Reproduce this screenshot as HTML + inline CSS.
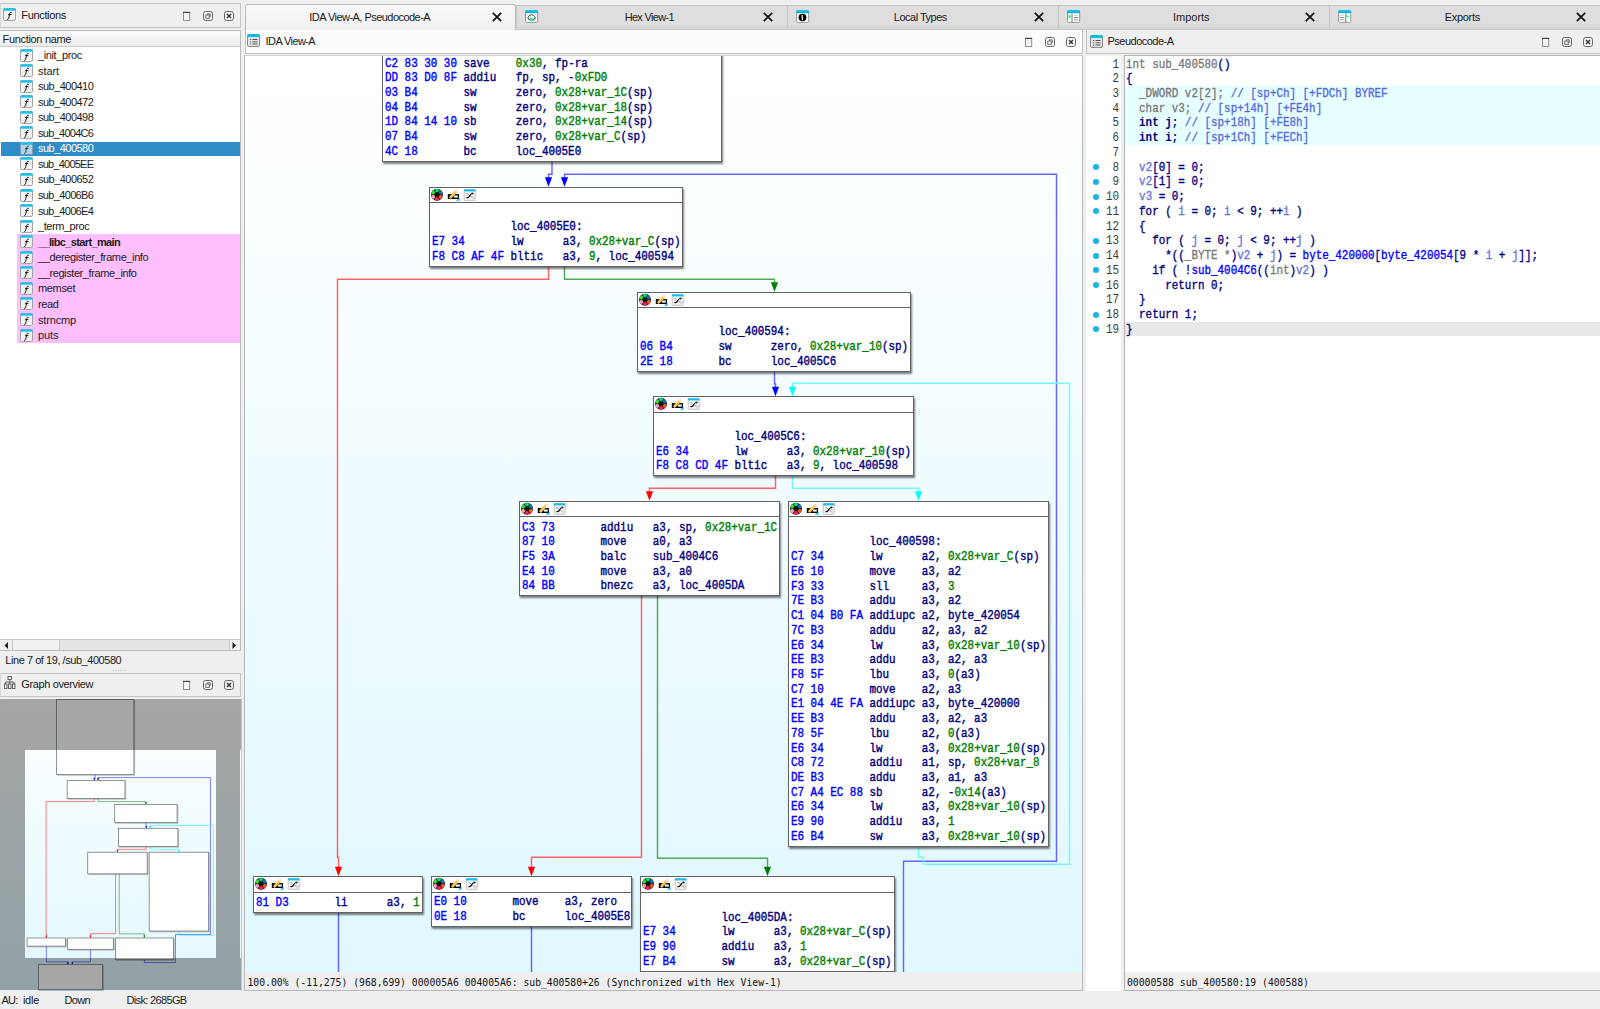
<!DOCTYPE html><html><head><meta charset="utf-8"><title>IDA</title><style>
*{box-sizing:border-box;margin:0;padding:0}
html,body{width:1600px;height:1009px;overflow:hidden;background:#efefef}
body{position:relative;font-family:"Liberation Sans",sans-serif;font-size:11px;letter-spacing:-0.38px;color:#1a1a1a}
.abs{position:absolute}
.ui{position:absolute;white-space:nowrap;line-height:14px;height:14px}
.mono{font-family:"Liberation Mono",monospace;font-size:11px;letter-spacing:-0.055px;white-space:pre}
.tbar{position:absolute;background:#efefef;border:1px solid #c4c4c4;border-left-color:#d8d8d8}
.row{position:absolute;left:0;width:240px;height:16px}
.row .t{position:absolute;left:38px;top:1px;line-height:15.5px;white-space:nowrap}
.fic{position:absolute;left:20px;top:1.5px;width:13px;height:13px}
.node{position:absolute;background:#fff;border:1px solid #636363;box-shadow:1.2px 1.8px 1.8px rgba(0,0,0,.5)}
.node .hd{position:absolute;left:0;top:0;right:0;height:15.4px;border-bottom:1px solid #636363}
.gl{position:absolute;white-space:pre;font-family:"Liberation Mono",monospace;font-size:12.4px;-webkit-text-stroke:0.4px currentColor;line-height:15px;height:15px;letter-spacing:-0.004px;color:#000080;transform:scaleX(0.88);transform-origin:0 0}
.b{color:#0000ff}.g{color:#008000}.n{color:#000080}
.cl{position:absolute;left:1126px;white-space:pre;-webkit-text-stroke:0.35px currentColor;font-family:"Liberation Mono",monospace;font-size:12.4px;line-height:15px;height:15px;letter-spacing:-0.004px;color:#000080;transform:scaleX(0.88);transform-origin:0 0}
.ln{position:absolute;left:1088px;width:31px;text-align:right;font-family:"Liberation Mono",monospace;font-size:12.4px;line-height:15px;height:15px;letter-spacing:-0.004px;color:#3a3a3a;transform:scaleX(0.88);transform-origin:100% 0}
.dot{position:absolute;left:1093px;width:6px;height:6px;border-radius:3px;background:#17b5e8}
.kb{color:#000080;font-weight:bold;-webkit-text-stroke:0}.gray{color:#7a7a7a}.cm{color:#5a6ae0}.lv{color:#6a74d8}.gv{color:#0000ff}.k{color:#000080}
</style></head><body>
<svg width="0" height="0" style="position:absolute"><defs>
<g id="i-f"><rect x="0.5" y="0.5" width="12" height="12" rx="1.3" fill="#f2f2f2" stroke="#a4a4a4"/><rect x="0.4" y="0.4" width="12.2" height="2.3" fill="#12c4f2"/><path d="M8.3 4.3 C7.3 4 7 4.6 6.8 5.5 L5.6 10.4 C5.4 11.2 5 11.6 4.4 11.4 M5.4 6.6 H8" fill="none" stroke="#111" stroke-width="0.95" stroke-linecap="round"/></g>
<g id="i-dock"><rect x="0.5" y="1.5" width="6.2" height="8" fill="#f6f6f6" stroke="#858585" stroke-width="0.9"/><rect x="0" y="0.8" width="7.2" height="1.2" fill="#444"/></g>
<g id="i-float"><rect x="0.5" y="0.5" width="9" height="9" rx="2" fill="none" stroke="#666"/><rect x="2.8" y="4" width="3.4" height="3.4" fill="none" stroke="#666" stroke-width=".9"/><path d="M4.5 4 V2.8 H7.3 V5.6 H6.2" fill="none" stroke="#666" stroke-width=".9"/></g>
<g id="i-close"><rect x="0.5" y="0.5" width="9" height="9" rx="2.2" fill="none" stroke="#666"/><path d="M3 3 L7 7 M7 3 L3 7" stroke="#333" stroke-width="1.4"/></g>
<g id="i-x"><path d="M0.8 0.8 L9.2 9.2 M9.2 0.8 L0.8 9.2" stroke="#111" stroke-width="1.7" fill="none"/></g>
<g id="n-hdr"><circle cx="8.0" cy="7.65" r="6" fill="#0c1414"/><path d="M5.59 2.48 A5.7 5.7 0 0 1 10.41 2.48 L9.14 5.20 A2.7 2.7 0 0 0 6.86 5.20Z" fill="#00e070"/><path d="M11.27 2.98 A5.7 5.7 0 0 1 13.68 7.15 L10.69 7.41 A2.7 2.7 0 0 0 9.55 5.44Z" fill="#1272b4"/><path d="M13.68 8.15 A5.7 5.7 0 0 1 11.27 12.32 L9.55 9.86 A2.7 2.7 0 0 0 10.69 7.89Z" fill="#ff5212"/><path d="M10.41 12.82 A5.7 5.7 0 0 1 5.59 12.82 L6.86 10.10 A2.7 2.7 0 0 0 9.14 10.10Z" fill="#ff2052"/><path d="M4.73 12.32 A5.7 5.7 0 0 1 2.32 8.15 L5.31 7.89 A2.7 2.7 0 0 0 6.45 9.86Z" fill="#ffa2b2"/><path d="M2.32 7.15 A5.7 5.7 0 0 1 4.73 2.98 L6.45 5.44 A2.7 2.7 0 0 0 5.31 7.41Z" fill="#34e434"/><rect x="18.8" y="7.1" width="11.2" height="4.9" fill="#000"/><rect x="24.8" y="8.5" width="4" height="2.1" fill="#fff"/><path d="M21.6 10.2 L27 4.5" stroke="#f6c650" stroke-width="2.7" stroke-linecap="round" fill="none"/><path d="M26.7 4.8 L27.5 4" stroke="#f3dcc8" stroke-width="2.2" stroke-linecap="round"/><path d="M26.6 13.8 H30.6 V10.8 Z" fill="#12c0f0"/><rect x="35.2" y="2.6" width="11" height="10.8" rx="0.6" fill="#f3f3f3" stroke="#b9b9b9" stroke-width="0.8"/><rect x="34.9" y="2.3" width="11.6" height="2.1" fill="#12c0f0"/><path d="M37.4 6.4 C40 6.6 41.6 10.4 44.2 10.6" fill="none" stroke="#9c9c9c" stroke-width="0.9"/><circle cx="44.3" cy="10.7" r="1" fill="#fff" stroke="#b5b5b5" stroke-width="0.6"/><path d="M37.4 10.6 H38.6 C41 10.6 40.6 6.6 43.2 6.5" fill="none" stroke="#111" stroke-width="1.15"/><path d="M42.8 5.2 L45 6.5 L42.8 7.8Z" fill="#111"/></g>
</defs></svg>
<div class="tbar" style="left:0;top:3px;width:241px;height:24.7px"></div>
<svg class="abs" style="left:3.2px;top:7.8px" width="13" height="13"><use href="#i-f"/></svg>
<div class="ui" style="left:21.3px;top:8px;letter-spacing:-0.343px;">Functions</div>
<svg class="abs" style="left:182.9px;top:10.7px" width="8" height="11"><use href="#i-dock"/></svg>
<svg class="abs" style="left:203px;top:10.5px" width="10" height="10"><use href="#i-float"/></svg>
<svg class="abs" style="left:224px;top:10.5px" width="10" height="10"><use href="#i-close"/></svg>
<div class="abs" style="left:0;top:29.5px;width:241px;height:621px;background:#fff;border:1px solid #bcbcbc;border-left:0"></div>
<div class="abs" style="left:0;top:30.5px;width:240px;height:16.5px;background:linear-gradient(#fbfbfb,#ececec);border-bottom:1px solid #cfcfcf"></div>
<div class="ui" style="left:2.6px;top:31.5px;letter-spacing:-0.328px;">Function name</div>
<div class="abs" style="left:17px;top:233.72px;width:223px;height:108.92px;background:#ffbfff"></div>
<div class="row" style="top:47.00px"><svg class="fic" width="13" height="13"><use href="#i-f"/></svg><div class="t" style="letter-spacing:-0.394px;">_init_proc</div></div>
<div class="row" style="top:62.56px"><svg class="fic" width="13" height="13"><use href="#i-f"/></svg><div class="t" style="letter-spacing:-0.078px;">start</div></div>
<div class="row" style="top:78.12px"><svg class="fic" width="13" height="13"><use href="#i-f"/></svg><div class="t" style="letter-spacing:-0.535px;">sub_400410</div></div>
<div class="row" style="top:93.68px"><svg class="fic" width="13" height="13"><use href="#i-f"/></svg><div class="t" style="letter-spacing:-0.535px;">sub_400472</div></div>
<div class="row" style="top:109.24px"><svg class="fic" width="13" height="13"><use href="#i-f"/></svg><div class="t" style="letter-spacing:-0.535px;">sub_400498</div></div>
<div class="row" style="top:124.80px"><svg class="fic" width="13" height="13"><use href="#i-f"/></svg><div class="t" style="letter-spacing:-0.718px;">sub_4004C6</div></div>
<div class="abs" style="left:0.5px;top:141.56px;width:239.5px;height:14.36px;background:#308cc6"></div>
<div class="row" style="top:140.36px"><svg class="fic" width="13" height="13"><use href="#i-f"/></svg><div class="t" style="color:#fff;letter-spacing:-0.535px;">sub_400580</div><div class="abs" style="left:20px;top:3.5px;width:13px;height:11px;background:rgba(48,140,198,.32)"></div></div>
<div class="row" style="top:155.92px"><svg class="fic" width="13" height="13"><use href="#i-f"/></svg><div class="t" style="letter-spacing:-0.780px;">sub_4005EE</div></div>
<div class="row" style="top:171.48px"><svg class="fic" width="13" height="13"><use href="#i-f"/></svg><div class="t" style="letter-spacing:-0.535px;">sub_400652</div></div>
<div class="row" style="top:187.04px"><svg class="fic" width="13" height="13"><use href="#i-f"/></svg><div class="t" style="letter-spacing:-0.657px;">sub_4006B6</div></div>
<div class="row" style="top:202.60px"><svg class="fic" width="13" height="13"><use href="#i-f"/></svg><div class="t" style="letter-spacing:-0.657px;">sub_4006E4</div></div>
<div class="row" style="top:218.16px"><svg class="fic" width="13" height="13"><use href="#i-f"/></svg><div class="t" style="letter-spacing:-0.438px;">_term_proc</div></div>
<div class="row" style="top:233.72px"><svg class="fic" width="13" height="13"><use href="#i-f"/></svg><div class="t" style="font-weight:bold;letter-spacing:-0.643px;">__libc_start_main</div></div>
<div class="row" style="top:249.28px"><svg class="fic" width="13" height="13"><use href="#i-f"/></svg><div class="t" style="letter-spacing:-0.390px;">__deregister_frame_info</div></div>
<div class="row" style="top:264.84px"><svg class="fic" width="13" height="13"><use href="#i-f"/></svg><div class="t" style="letter-spacing:-0.405px;">__register_frame_info</div></div>
<div class="row" style="top:280.40px"><svg class="fic" width="13" height="13"><use href="#i-f"/></svg><div class="t" style="letter-spacing:-0.336px;">memset</div></div>
<div class="row" style="top:295.96px"><svg class="fic" width="13" height="13"><use href="#i-f"/></svg><div class="t" style="letter-spacing:-0.354px;">read</div></div>
<div class="row" style="top:311.52px"><svg class="fic" width="13" height="13"><use href="#i-f"/></svg><div class="t" style="letter-spacing:-0.159px;">strncmp</div></div>
<div class="row" style="top:327.08px"><svg class="fic" width="13" height="13"><use href="#i-f"/></svg><div class="t" style="letter-spacing:-0.135px;">puts</div></div>
<div class="abs" style="left:0;top:638.5px;width:240px;height:11.6px;background:#e4e4e4;border-top:1px solid #c8c8c8"></div>
<div class="abs" style="left:11.5px;top:639.5px;width:48px;height:10.6px;background:#f1f1f1;border-left:1px solid #c4c4c4;border-right:1px solid #c4c4c4"></div>
<div class="abs" style="left:0;top:639.5px;width:11.5px;height:10.6px;background:#efefef"></div>
<div class="abs" style="left:229px;top:639.5px;width:11px;height:10.6px;background:#efefef;border-left:1px solid #c4c4c4"></div>
<svg class="abs" style="left:4px;top:641.5px" width="5" height="7"><path d="M4 0 L0.5 3.5 L4 7 Z" fill="#222"/></svg>
<svg class="abs" style="left:232px;top:641.5px" width="5" height="7"><path d="M0.5 0 L4 3.5 L0.5 7 Z" fill="#222"/></svg>
<div class="ui" style="left:5.3px;top:653px;letter-spacing:-0.449px;">Line 7 of 19, /sub_400580</div>
<div class="tbar" style="left:0;top:672.5px;width:241px;height:24px"></div>
<svg class="abs" style="left:4px;top:676px" width="12" height="14"><g fill="none" stroke="#555" stroke-width="0.9"><rect x="4" y="0.5" width="3.5" height="3"/><path d="M5.8 3.5 V6 M1.5 8 V6 H10 V8 M5.8 6 V8"/><rect x="0.5" y="8" width="2.5" height="4.5"/><rect x="4.5" y="8" width="2.5" height="4.5"/><rect x="8.5" y="8" width="2.5" height="4.5"/></g></svg>
<div class="ui" style="left:21.2px;top:677px;letter-spacing:-0.359px;">Graph overview</div>
<svg class="abs" style="left:182.9px;top:679.7px" width="8" height="11"><use href="#i-dock"/></svg>
<svg class="abs" style="left:203px;top:679.5px" width="10" height="10"><use href="#i-float"/></svg>
<svg class="abs" style="left:224px;top:679.5px" width="10" height="10"><use href="#i-close"/></svg>
<div class="ui" style="left:1.5px;top:992.8px;letter-spacing:-0.779px;">AU:</div>
<div class="ui" style="left:22.9px;top:992.8px;letter-spacing:-0.230px;">idle</div>
<div class="ui" style="left:64.4px;top:992.8px;letter-spacing:-0.630px;">Down</div>
<div class="ui" style="left:126.5px;top:992.8px;letter-spacing:-0.655px;">Disk: 2685GB</div>
<div class="abs" style="left:113px;top:669.5px;width:14px;height:1px;background:repeating-linear-gradient(90deg,#c4c4c4 0,#c4c4c4 1px,transparent 1px,transparent 2.4px)"></div>
<div class="abs" style="left:0;top:698.5px;width:240.5px;height:292px;overflow:hidden;background:linear-gradient(#ffffff,#e0f8ff)">
<svg class="abs" style="left:0;top:0" width="240.5" height="292">
<path d="M95.15 75.52 L95.15 78.61 L94.35 78.61 L94.35 81.46" fill="none" stroke="#0000ff" stroke-width="0.9" stroke-opacity="0.55"/>
<path d="M93.35 79.06 L95.35 79.06 L94.35 81.46 Z" fill="#0000ff"/>
<path d="M175.47 261.06 L175.47 235.59 L210.43 235.59 L210.43 78.61 L98.01 78.61 L98.01 81.46" fill="none" stroke="#0000ff" stroke-width="0.9" stroke-opacity="0.55"/>
<path d="M97.01 79.06 L99.01 79.06 L98.01 81.46 Z" fill="#0000ff"/>
<path d="M94.35 99.51 L94.35 102.60 L46.14 102.60 L46.14 234.67 L46.36 234.67 L46.36 239.01" fill="none" stroke="#ff0000" stroke-width="0.9" stroke-opacity="0.55"/>
<path d="M45.36 236.61 L47.36 236.61 L46.36 239.01 Z" fill="#ff0000"/>
<path d="M98.01 99.51 L98.01 102.60 L145.99 102.60 L145.99 105.45" fill="none" stroke="#008000" stroke-width="0.9" stroke-opacity="0.55"/>
<path d="M144.99 103.05 L146.99 103.05 L145.99 105.45 Z" fill="#008000"/>
<path d="M145.99 123.51 L145.99 126.48 L146.22 126.48 L146.22 129.33" fill="none" stroke="#0000ff" stroke-width="0.9" stroke-opacity="0.55"/>
<path d="M145.22 126.93 L147.22 126.93 L146.22 129.33 Z" fill="#0000ff"/>
<path d="M178.89 232.04 L178.89 234.67 L180.04 234.67 L180.04 236.27 L213.40 236.27 L213.40 126.36 L150.10 126.36 L150.10 129.33" fill="none" stroke="#00ffff" stroke-width="0.9" stroke-opacity="0.55"/>
<path d="M149.10 126.93 L151.10 126.93 L150.10 129.33 Z" fill="#00ffff"/>
<path d="M146.22 147.38 L146.22 150.35 L117.43 150.35 L117.43 153.21" fill="none" stroke="#ff0000" stroke-width="0.9" stroke-opacity="0.55"/>
<path d="M116.43 150.81 L118.43 150.81 L117.43 153.21 Z" fill="#ff0000"/>
<path d="M150.10 147.38 L150.10 150.35 L178.89 150.35 L178.89 153.21" fill="none" stroke="#00ffff" stroke-width="0.9" stroke-opacity="0.55"/>
<path d="M177.89 150.81 L179.89 150.81 L178.89 153.21 Z" fill="#00ffff"/>
<path d="M115.60 174.80 L115.60 234.67 L90.47 234.67 L90.47 239.01" fill="none" stroke="#ff0000" stroke-width="0.9" stroke-opacity="0.55"/>
<path d="M89.47 236.61 L91.47 236.61 L90.47 239.01 Z" fill="#ff0000"/>
<path d="M119.26 174.80 L119.26 234.90 L144.39 234.90 L144.39 239.01" fill="none" stroke="#008000" stroke-width="0.9" stroke-opacity="0.55"/>
<path d="M143.39 236.61 L145.39 236.61 L144.39 239.01 Z" fill="#008000"/>
<path d="M46.36 247.12 L46.36 262.89 L67.96 262.89 L67.96 265.63" fill="none" stroke="#0000ff" stroke-width="0.9" stroke-opacity="0.55"/>
<path d="M66.96 263.23 L68.96 263.23 L67.96 265.63 Z" fill="#0000ff"/>
<path d="M90.47 250.32 L90.47 262.89 L72.30 262.89 L72.30 265.63" fill="none" stroke="#0000ff" stroke-width="0.9" stroke-opacity="0.55"/>
<path d="M71.30 263.23 L73.30 263.23 L72.30 265.63 Z" fill="#0000ff"/>
<path d="M144.39 260.61 L144.39 263.58 L175.47 263.58 L175.47 261.06" fill="none" stroke="#0000ff" stroke-width="0.9" stroke-opacity="0.55"/>
<rect x="56.53" y="0.57" width="77.35" height="74.95" fill="#fff" stroke="#7a7a7a" stroke-width="0.8"/>
<path d="M57.13 76.32 H134.68 V1.17" fill="none" stroke="#000" stroke-opacity="0.25" stroke-width="0.9"/>
<rect x="67.16" y="81.46" width="57.81" height="18.05" fill="#fff" stroke="#7a7a7a" stroke-width="0.8"/>
<path d="M67.76 100.31 H125.77 V82.06" fill="none" stroke="#000" stroke-opacity="0.25" stroke-width="0.9"/>
<rect x="114.69" y="105.45" width="62.38" height="18.05" fill="#fff" stroke="#7a7a7a" stroke-width="0.8"/>
<path d="M115.29 124.31 H177.87 V106.05" fill="none" stroke="#000" stroke-opacity="0.25" stroke-width="0.9"/>
<rect x="118.46" y="129.33" width="59.41" height="18.05" fill="#fff" stroke="#7a7a7a" stroke-width="0.8"/>
<path d="M119.06 148.18 H178.67 V129.93" fill="none" stroke="#000" stroke-opacity="0.25" stroke-width="0.9"/>
<rect x="87.72" y="153.21" width="59.41" height="21.59" fill="#fff" stroke="#7a7a7a" stroke-width="0.8"/>
<path d="M88.32 175.60 H147.93 V153.81" fill="none" stroke="#000" stroke-opacity="0.25" stroke-width="0.9"/>
<rect x="149.19" y="153.21" width="59.41" height="78.83" fill="#fff" stroke="#7a7a7a" stroke-width="0.8"/>
<path d="M149.79 232.84 H209.40 V153.81" fill="none" stroke="#000" stroke-opacity="0.25" stroke-width="0.9"/>
<rect x="27.06" y="239.01" width="38.50" height="8.11" fill="#fff" stroke="#7a7a7a" stroke-width="0.8"/>
<path d="M27.66 247.92 H66.36 V239.61" fill="none" stroke="#000" stroke-opacity="0.25" stroke-width="0.9"/>
<rect x="67.62" y="239.01" width="45.81" height="11.31" fill="#fff" stroke="#7a7a7a" stroke-width="0.8"/>
<path d="M68.22 251.12 H114.23 V239.61" fill="none" stroke="#000" stroke-opacity="0.25" stroke-width="0.9"/>
<rect x="115.49" y="239.01" width="57.92" height="21.59" fill="#fff" stroke="#7a7a7a" stroke-width="0.8"/>
<path d="M116.09 261.41 H174.21 V239.61" fill="none" stroke="#000" stroke-opacity="0.25" stroke-width="0.9"/>
<rect x="38.39" y="265.63" width="64.21" height="25.14" fill="#fff" stroke="#7a7a7a" stroke-width="0.8"/>
<path d="M38.99 291.57 H103.40 V266.23" fill="none" stroke="#000" stroke-opacity="0.25" stroke-width="0.9"/>
</svg>
<div class="abs" style="left:0;top:0;width:240.5px;height:51.30px;background:rgba(0,0,0,0.35)"></div>
<div class="abs" style="left:0;top:259.70px;width:240.5px;height:32.30px;background:rgba(0,0,0,0.35)"></div>
<div class="abs" style="left:0;top:51.30px;width:25px;height:208.40px;background:rgba(0,0,0,0.35)"></div>
<div class="abs" style="left:216.4px;top:51.30px;width:24.099999999999994px;height:208.40px;background:rgba(0,0,0,0.35)"></div>
</div>
<div class="abs" style="left:240.5px;top:698.5px;width:1px;height:292px;background:#c8c8c8"></div>
<div class="abs" style="left:516px;top:5px;width:1084px;height:24px;background:linear-gradient(#dedede 0,#dedede 80%,#d4d4d4 100%);border-top:1px solid #c2c2c2"></div>
<div class="abs" style="left:244px;top:29px;width:1356px;height:1px;background:#c9c9c9"></div>
<div class="abs" style="left:516px;top:6px;width:1px;height:22px;background:#c6c6c6"></div>
<div class="abs" style="left:787px;top:6px;width:1px;height:22px;background:#c6c6c6"></div>
<div class="abs" style="left:1058px;top:6px;width:1px;height:22px;background:#c6c6c6"></div>
<div class="abs" style="left:1329px;top:6px;width:1px;height:22px;background:#c6c6c6"></div>
<div class="abs" style="left:244.5px;top:3.5px;width:271.5px;height:26.5px;background:linear-gradient(#f8f8f8,#f1f1f1);border:1px solid #bdbdbd;border-bottom:0;border-radius:3px 3px 0 0"></div>
<div class="ui" style="left:309.30px;top:9.5px;letter-spacing:-0.538px">IDA View-A, Pseudocode-A</div>
<svg class="abs" style="left:491.5px;top:11.5px" width="10" height="10"><use href="#i-x"/></svg>
<div class="ui" style="left:624.65px;top:10px;letter-spacing:-0.674px">Hex View-1</div>
<svg class="abs" style="left:763px;top:12px" width="10" height="10"><use href="#i-x"/></svg>
<svg class="abs" style="left:525.4px;top:9.9px" width="14" height="14"><rect x="0.5" y="0.5" width="12.2" height="11.9" rx="1" fill="#fbfbfb" stroke="#9a9a9a"/><rect x="0.3" y="0.2" width="12.6" height="2.9" rx="0.8" fill="#00c8f4"/><rect x="0.3" y="2.4" width="12.6" height="0.7" fill="#0098c0"/><path d="M3.3 9.4 A3.5 3.5 0 1 1 9.9 9.4" fill="none" stroke="#333" stroke-width="0.9"/><path d="M2.9 8.3 Q6.6 13.6 10.3 8.3 Q6.6 10.6 2.9 8.3Z" fill="#111"/><circle cx="6.6" cy="9.4" r="1.8" fill="#3eea8a"/></svg>
<div class="ui" style="left:893.75px;top:10px;letter-spacing:-0.491px">Local Types</div>
<svg class="abs" style="left:1034px;top:12px" width="10" height="10"><use href="#i-x"/></svg>
<svg class="abs" style="left:796.4px;top:9.9px" width="14" height="14"><rect x="0.5" y="0.5" width="12.2" height="11.9" rx="1" fill="#fbfbfb" stroke="#9a9a9a"/><rect x="0.3" y="0.2" width="12.6" height="2.9" rx="0.8" fill="#00c8f4"/><rect x="0.3" y="2.4" width="12.6" height="0.7" fill="#0098c0"/><ellipse cx="6.5" cy="7.5" rx="3.9" ry="3.7" fill="#000"/><path d="M6.2 4.9 C5.6 6.5 6.9 8.2 6.4 10.2" fill="none" stroke="#fff" stroke-width="1.2"/></svg>
<div class="ui" style="left:1173.00px;top:10px;letter-spacing:-0.010px">Imports</div>
<svg class="abs" style="left:1305px;top:12px" width="10" height="10"><use href="#i-x"/></svg>
<svg class="abs" style="left:1067.4px;top:9.9px" width="14" height="14"><rect x="0.5" y="0.5" width="12.2" height="11.9" rx="1" fill="#fbfbfb" stroke="#9a9a9a"/><rect x="0.3" y="0.2" width="12.6" height="2.9" rx="0.8" fill="#00c8f4"/><rect x="0.3" y="2.4" width="12.6" height="0.7" fill="#0098c0"/><path d="M5 3.2 V12.2" stroke="#666" stroke-width="0.8"/><path d="M1.4 4.2 L5.6 6.4 L1.4 8.6Z" fill="#58ec9e"/><path d="M6.8 5.6 H11.4" stroke="#d0d0d0" stroke-width="0.9"/><path d="M6.8 7.5 H11.4" stroke="#808080" stroke-width="0.9"/><path d="M6.8 9.7 H11.4" stroke="#b0b0b0" stroke-width="1.2"/></svg>
<div class="ui" style="left:1444.75px;top:10px;letter-spacing:-0.313px">Exports</div>
<svg class="abs" style="left:1576px;top:12px" width="10" height="10"><use href="#i-x"/></svg>
<svg class="abs" style="left:1338.4px;top:9.9px" width="14" height="14"><rect x="0.5" y="0.5" width="12.2" height="11.9" rx="1" fill="#fbfbfb" stroke="#9a9a9a"/><rect x="0.3" y="0.2" width="12.6" height="2.9" rx="0.8" fill="#00c8f4"/><rect x="0.3" y="2.4" width="12.6" height="0.7" fill="#0098c0"/><path d="M7.8 3.2 V12.2" stroke="#555" stroke-width="0.8"/><path d="M7.3 4.2 L11.5 6.4 L7.3 8.6Z" fill="#58ec9e"/><path d="M1.6 5.6 H6.4" stroke="#d0d0d0" stroke-width="0.9"/><path d="M1.6 7.5 H6.4" stroke="#909090" stroke-width="0.9"/><path d="M1.6 9.7 H6.4" stroke="#b0b0b0" stroke-width="1.2"/></svg>
<div class="abs" style="left:244.5px;top:30px;width:838.2px;height:24px;background:#fcfcfc;border:1px solid #c4c4c4;border-top:0"></div>
<svg class="abs" style="left:247.3px;top:34.3px" width="14" height="14"><rect x="0.5" y="0.5" width="12" height="12" rx="1.5" fill="#e6e6e6" stroke="#8c8c8c"/><rect x="0.3" y="0.2" width="12.4" height="2.7" rx="0.8" fill="#00c0f0"/><path d="M3 5.5 h1.2 M5.5 5.5 H10.5 M3 7.8 h1.2 M5.5 7.8 H10.5 M3 10 h1.2 M5.5 10 H10.5" stroke="#555" stroke-width="1"/></svg>
<div class="ui" style="left:265.6px;top:34px;letter-spacing:-0.593px;">IDA View-A</div>
<svg class="abs" style="left:1024.9px;top:37.2px" width="8" height="11"><use href="#i-dock"/></svg>
<svg class="abs" style="left:1045px;top:37.0px" width="10" height="10"><use href="#i-float"/></svg>
<svg class="abs" style="left:1066px;top:37.0px" width="10" height="10"><use href="#i-close"/></svg>
<div class="abs" style="left:1086px;top:30px;width:514px;height:24px;background:#efefef;border:1px solid #c4c4c4;border-top:0;border-right:0"></div>
<svg class="abs" style="left:1090px;top:34.5px" width="14" height="14"><rect x="0.5" y="0.5" width="12" height="12" rx="1.5" fill="#e6e6e6" stroke="#8c8c8c"/><rect x="0.3" y="0.2" width="12.4" height="2.7" rx="0.8" fill="#00c0f0"/><path d="M3 5.5 h1.2 M5.5 5.5 H10.5 M3 7.8 h1.2 M5.5 7.8 H10.5 M3 10 h1.2 M5.5 10 H10.5" stroke="#555" stroke-width="1"/></svg>
<div class="ui" style="left:1107.5px;top:34px;letter-spacing:-0.513px;">Pseudocode-A</div>
<svg class="abs" style="left:1541.9px;top:37.2px" width="8" height="11"><use href="#i-dock"/></svg>
<svg class="abs" style="left:1562px;top:37.0px" width="10" height="10"><use href="#i-float"/></svg>
<svg class="abs" style="left:1583px;top:37.0px" width="10" height="10"><use href="#i-close"/></svg>
<div class="abs" style="left:244px;top:55.3px;width:838.7px;height:935.7px;background:#efefef;border:1px solid #b8b8b8;border-top-color:#d0d0d0"></div>
<div id="graph" class="abs" style="left:245px;top:56.3px;width:836.7px;height:915.7px;overflow:hidden;background:linear-gradient(#ffffff,#e0f8ff)">
<svg class="abs" style="left:0;top:0" width="836.7" height="915.7" viewBox="245 56.3 836.7 915.7">
<path d="M552 161 L552 174.5 L548.5 174.5 L548.5 179" fill="none" stroke="#6464ff" stroke-width="1.45"/>
<path d="M544.9 177.5 L552.1 177.5 L548.5 187 Z" fill="#0000ff"/>
<path d="M903.5 973 L903.5 861.5 L1056.5 861.5 L1056.5 174.5 L564.5 174.5 L564.5 179" fill="none" stroke="#6464ff" stroke-width="1.45"/>
<path d="M560.9 177.5 L568.1 177.5 L564.5 187 Z" fill="#0000ff"/>
<path d="M548.5 266 L548.5 279.5 L337.5 279.5 L337.5 857.5 L338.5 857.5 L338.5 868.5" fill="none" stroke="#ff6262" stroke-width="1.45"/>
<path d="M334.9 867.0 L342.1 867.0 L338.5 876.5 Z" fill="#ff0000"/>
<path d="M564.5 266 L564.5 279.5 L774.5 279.5 L774.5 284" fill="none" stroke="#55a855" stroke-width="1.45"/>
<path d="M770.9 282.5 L778.1 282.5 L774.5 292 Z" fill="#008000"/>
<path d="M774.5 371 L774.5 384 L775.5 384 L775.5 388.5" fill="none" stroke="#6464ff" stroke-width="1.45"/>
<path d="M771.9 387.0 L779.1 387.0 L775.5 396.5 Z" fill="#0000ff"/>
<path d="M918.5 846 L918.5 857.5 L923.5 857.5 L923.5 864.5 L1069.5 864.5 L1069.5 383.5 L792.5 383.5 L792.5 388.5" fill="none" stroke="#70fbfb" stroke-width="1.45"/>
<path d="M788.9 387.0 L796.1 387.0 L792.5 396.5 Z" fill="#00ffff"/>
<path d="M775.5 475.5 L775.5 488.5 L649.5 488.5 L649.5 493" fill="none" stroke="#ff6262" stroke-width="1.45"/>
<path d="M645.9 491.5 L653.1 491.5 L649.5 501 Z" fill="#ff0000"/>
<path d="M792.5 475.5 L792.5 488.5 L918.5 488.5 L918.5 493" fill="none" stroke="#70fbfb" stroke-width="1.45"/>
<path d="M914.9 491.5 L922.1 491.5 L918.5 501 Z" fill="#00ffff"/>
<path d="M641.5 595.5 L641.5 857.5 L531.5 857.5 L531.5 868.5" fill="none" stroke="#ff6262" stroke-width="1.45"/>
<path d="M527.9 867.0 L535.1 867.0 L531.5 876.5 Z" fill="#ff0000"/>
<path d="M657.5 595.5 L657.5 858.5 L767.5 858.5 L767.5 868.5" fill="none" stroke="#55a855" stroke-width="1.45"/>
<path d="M763.9 867.0 L771.1 867.0 L767.5 876.5 Z" fill="#008000"/>
<path d="M338.5 912 L338.5 973" fill="none" stroke="#6464ff" stroke-width="1.45"/>
<path d="M531.5 926 L531.5 973" fill="none" stroke="#6464ff" stroke-width="1.45"/>
<path d="M767.5 971 L767.5 973" fill="none" stroke="#6464ff" stroke-width="1.45"/>
</svg>
<div class="node" style="left:137px;top:-26.299999999999997px;width:339.5px;height:131.6px">
<div class="gl" style="left:2px;top:25.58px"><span class="b">C2 83 30 30 </span><span class="n">save    </span><span class="g">0x30</span><span class="n">, fp-ra</span></div>
<div class="gl" style="left:2px;top:40.30px"><span class="b">DD 83 D0 8F </span><span class="n">addiu   </span><span class="n">fp, sp, -</span><span class="g">0xFD0</span></div>
<div class="gl" style="left:2px;top:55.02px"><span class="b">03 B4       </span><span class="n">sw      </span><span class="n">zero, </span><span class="g">0x28+var_1C</span><span class="n">(sp)</span></div>
<div class="gl" style="left:2px;top:69.74px"><span class="b">04 B4       </span><span class="n">sw      </span><span class="n">zero, </span><span class="g">0x28+var_18</span><span class="n">(sp)</span></div>
<div class="gl" style="left:2px;top:84.46px"><span class="b">1D 84 14 10 </span><span class="n">sb      </span><span class="n">zero, </span><span class="g">0x28+var_14</span><span class="n">(sp)</span></div>
<div class="gl" style="left:2px;top:99.18px"><span class="b">07 B4       </span><span class="n">sw      </span><span class="n">zero, </span><span class="g">0x28+var_C</span><span class="n">(sp)</span></div>
<div class="gl" style="left:2px;top:113.90px"><span class="b">4C 18       </span><span class="n">bc      </span><span class="n">loc_4005E0</span></div>
</div>
<div class="node" style="left:183.5px;top:130.7px;width:254.0px;height:79.6px">
<div class="hd"></div>
<svg class="abs" style="left:-1px;top:-1px" width="48" height="15"><use href="#n-hdr"/></svg>
<div class="gl" style="left:2px;top:32.46px"><span class="n">            loc_4005E0:</span></div>
<div class="gl" style="left:2px;top:47.18px"><span class="b">E7 34       </span><span class="n">lw      </span><span class="n">a3, </span><span class="g">0x28+var_C</span><span class="n">(sp)</span></div>
<div class="gl" style="left:2px;top:61.90px"><span class="b">F8 C8 AF 4F </span><span class="n">bltic   </span><span class="n">a3, </span><span class="g">9</span><span class="n">, loc_400594</span></div>
</div>
<div class="node" style="left:391.5px;top:235.7px;width:274.0px;height:79.6px">
<div class="hd"></div>
<svg class="abs" style="left:-1px;top:-1px" width="48" height="15"><use href="#n-hdr"/></svg>
<div class="gl" style="left:2px;top:32.46px"><span class="n">            loc_400594:</span></div>
<div class="gl" style="left:2px;top:47.18px"><span class="b">06 B4       </span><span class="n">sw      </span><span class="n">zero, </span><span class="g">0x28+var_10</span><span class="n">(sp)</span></div>
<div class="gl" style="left:2px;top:61.90px"><span class="b">2E 18       </span><span class="n">bc      </span><span class="n">loc_4005C6</span></div>
</div>
<div class="node" style="left:408px;top:340.2px;width:261px;height:79.6px">
<div class="hd"></div>
<svg class="abs" style="left:-1px;top:-1px" width="48" height="15"><use href="#n-hdr"/></svg>
<div class="gl" style="left:2px;top:32.46px"><span class="n">            loc_4005C6:</span></div>
<div class="gl" style="left:2px;top:47.18px"><span class="b">E6 34       </span><span class="n">lw      </span><span class="n">a3, </span><span class="g">0x28+var_10</span><span class="n">(sp)</span></div>
<div class="gl" style="left:2px;top:61.90px"><span class="b">F8 C8 CD 4F </span><span class="n">bltic   </span><span class="n">a3, </span><span class="g">9</span><span class="n">, loc_400598</span></div>
</div>
<div class="node" style="left:273.5px;top:444.7px;width:261.0px;height:95.1px">
<div class="hd"></div>
<svg class="abs" style="left:-1px;top:-1px" width="48" height="15"><use href="#n-hdr"/></svg>
<div class="gl" style="left:2px;top:18.52px"><span class="b">C3 73       </span><span class="n">addiu   </span><span class="n">a3, sp, </span><span class="g">0x28+var_1C</span></div>
<div class="gl" style="left:2px;top:33.24px"><span class="b">87 10       </span><span class="n">move    </span><span class="n">a0, a3</span></div>
<div class="gl" style="left:2px;top:47.96px"><span class="b">F5 3A       </span><span class="n">balc    </span><span class="n">sub_4004C6</span></div>
<div class="gl" style="left:2px;top:62.68px"><span class="b">E4 10       </span><span class="n">move    </span><span class="n">a3, a0</span></div>
<div class="gl" style="left:2px;top:77.40px"><span class="b">84 BB       </span><span class="n">bnezc   </span><span class="n">a3, loc_4005DA</span></div>
</div>
<div class="node" style="left:542.5px;top:444.7px;width:261.0px;height:345.6px">
<div class="hd"></div>
<svg class="abs" style="left:-1px;top:-1px" width="48" height="15"><use href="#n-hdr"/></svg>
<div class="gl" style="left:2px;top:33.50px"><span class="n">            loc_400598:</span></div>
<div class="gl" style="left:2px;top:48.22px"><span class="b">C7 34       </span><span class="n">lw      </span><span class="n">a2, </span><span class="g">0x28+var_C</span><span class="n">(sp)</span></div>
<div class="gl" style="left:2px;top:62.94px"><span class="b">E6 10       </span><span class="n">move    </span><span class="n">a3, a2</span></div>
<div class="gl" style="left:2px;top:77.66px"><span class="b">F3 33       </span><span class="n">sll     </span><span class="n">a3, </span><span class="g">3</span></div>
<div class="gl" style="left:2px;top:92.38px"><span class="b">7E B3       </span><span class="n">addu    </span><span class="n">a3, a2</span></div>
<div class="gl" style="left:2px;top:107.10px"><span class="b">C1 04 B0 FA </span><span class="n">addiupc </span><span class="n">a2, byte_420054</span></div>
<div class="gl" style="left:2px;top:121.82px"><span class="b">7C B3       </span><span class="n">addu    </span><span class="n">a2, a3, a2</span></div>
<div class="gl" style="left:2px;top:136.54px"><span class="b">E6 34       </span><span class="n">lw      </span><span class="n">a3, </span><span class="g">0x28+var_10</span><span class="n">(sp)</span></div>
<div class="gl" style="left:2px;top:151.26px"><span class="b">EE B3       </span><span class="n">addu    </span><span class="n">a3, a2, a3</span></div>
<div class="gl" style="left:2px;top:165.98px"><span class="b">F8 5F       </span><span class="n">lbu     </span><span class="n">a3, </span><span class="g">0</span><span class="n">(a3)</span></div>
<div class="gl" style="left:2px;top:180.70px"><span class="b">C7 10       </span><span class="n">move    </span><span class="n">a2, a3</span></div>
<div class="gl" style="left:2px;top:195.42px"><span class="b">E1 04 4E FA </span><span class="n">addiupc </span><span class="n">a3, byte_420000</span></div>
<div class="gl" style="left:2px;top:210.14px"><span class="b">EE B3       </span><span class="n">addu    </span><span class="n">a3, a2, a3</span></div>
<div class="gl" style="left:2px;top:224.86px"><span class="b">78 5F       </span><span class="n">lbu     </span><span class="n">a2, </span><span class="g">0</span><span class="n">(a3)</span></div>
<div class="gl" style="left:2px;top:239.58px"><span class="b">E6 34       </span><span class="n">lw      </span><span class="n">a3, </span><span class="g">0x28+var_10</span><span class="n">(sp)</span></div>
<div class="gl" style="left:2px;top:254.30px"><span class="b">C8 72       </span><span class="n">addiu   </span><span class="n">a1, sp, </span><span class="g">0x28+var_8</span></div>
<div class="gl" style="left:2px;top:269.02px"><span class="b">DE B3       </span><span class="n">addu    </span><span class="n">a3, a1, a3</span></div>
<div class="gl" style="left:2px;top:283.74px"><span class="b">C7 A4 EC 88 </span><span class="n">sb      </span><span class="n">a2, -</span><span class="g">0x14</span><span class="n">(a3)</span></div>
<div class="gl" style="left:2px;top:298.46px"><span class="b">E6 34       </span><span class="n">lw      </span><span class="n">a3, </span><span class="g">0x28+var_10</span><span class="n">(sp)</span></div>
<div class="gl" style="left:2px;top:313.18px"><span class="b">E9 90       </span><span class="n">addiu   </span><span class="n">a3, </span><span class="g">1</span></div>
<div class="gl" style="left:2px;top:327.90px"><span class="b">E6 B4       </span><span class="n">sw      </span><span class="n">a3, </span><span class="g">0x28+var_10</span><span class="n">(sp)</span></div>
</div>
<div class="node" style="left:8px;top:820.2px;width:169.5px;height:36.1px">
<div class="hd"></div>
<svg class="abs" style="left:-1px;top:-1px" width="48" height="15"><use href="#n-hdr"/></svg>
<div class="gl" style="left:2px;top:18.40px"><span class="b">81 D3       </span><span class="n">li      </span><span class="n">a3, </span><span class="g">1</span></div>
</div>
<div class="node" style="left:185.5px;top:820.2px;width:201.5px;height:50.1px">
<div class="hd"></div>
<svg class="abs" style="left:-1px;top:-1px" width="48" height="15"><use href="#n-hdr"/></svg>
<div class="gl" style="left:2px;top:17.68px"><span class="b">E0 10       </span><span class="n">move    </span><span class="n">a3, zero</span></div>
<div class="gl" style="left:2px;top:32.40px"><span class="b">0E 18       </span><span class="n">bc      </span><span class="n">loc_4005E8</span></div>
</div>
<div class="node" style="left:395px;top:820.2px;width:254.5px;height:95.1px">
<div class="hd"></div>
<svg class="abs" style="left:-1px;top:-1px" width="48" height="15"><use href="#n-hdr"/></svg>
<div class="gl" style="left:2px;top:33.24px"><span class="n">            loc_4005DA:</span></div>
<div class="gl" style="left:2px;top:47.96px"><span class="b">E7 34       </span><span class="n">lw      </span><span class="n">a3, </span><span class="g">0x28+var_C</span><span class="n">(sp)</span></div>
<div class="gl" style="left:2px;top:62.68px"><span class="b">E9 90       </span><span class="n">addiu   </span><span class="n">a3, </span><span class="g">1</span></div>
<div class="gl" style="left:2px;top:77.40px"><span class="b">E7 B4       </span><span class="n">sw      </span><span class="n">a3, </span><span class="g">0x28+var_C</span><span class="n">(sp)</span></div>
</div>
</div>
<div class="abs mono" style="left:247.5px;top:975.7px;font-family:'DejaVu Sans Mono','Liberation Mono',monospace;font-size:9.75px;line-height:14px;letter-spacing:0;color:#111">100.00% (-11,275) (968,699) 000005A6 004005A6: sub_400580+26 (Synchronized with Hex View-1)</div>
<div class="abs" style="left:1086px;top:55.5px;width:35px;height:935.5px;background:#fff"></div>
<div class="abs" style="left:1124px;top:54.6px;width:476px;height:936.4px;background:#efefef;border:1px solid #b4b4b4;border-right:0"></div>
<div class="abs" style="left:1125px;top:55.6px;width:475px;height:916.4px;background:#fff"></div>
<div class="abs" style="left:1125px;top:85.96px;width:475px;height:58.92px;background:#e6ffff"></div>
<div class="abs" style="left:1125px;top:321.64px;width:475px;height:14.73px;background:#e8e8e8"></div>
<div class="ln" style="top:57.55px">1</div>
<div class="cl" style="top:57.55px"><span class="gray">int sub_400580</span><span class="k">()</span></div>
<div class="ln" style="top:72.28px">2</div>
<div class="cl" style="top:72.28px"><span class="k">{</span></div>
<div class="ln" style="top:87.01px">3</div>
<div class="cl" style="top:87.01px"><span class="gray">  _DWORD v2[2]; </span><span class="cm">// [sp+Ch] [+FDCh] BYREF</span></div>
<div class="ln" style="top:101.74px">4</div>
<div class="cl" style="top:101.74px"><span class="gray">  char v3; </span><span class="cm">// [sp+14h] [+FE4h]</span></div>
<div class="ln" style="top:116.47px">5</div>
<div class="cl" style="top:116.47px"><span class="kb">  int j; </span><span class="cm">// [sp+18h] [+FE8h]</span></div>
<div class="ln" style="top:131.20px">6</div>
<div class="cl" style="top:131.20px"><span class="kb">  int i; </span><span class="cm">// [sp+1Ch] [+FECh]</span></div>
<div class="ln" style="top:145.93px">7</div>
<div class="ln" style="top:160.66px">8</div>
<div class="dot" style="top:164.21px"></div>
<div class="cl" style="top:160.66px"><span class="k">  </span><span class="lv">v2</span><span class="k">[0] = 0;</span></div>
<div class="ln" style="top:175.39px">9</div>
<div class="dot" style="top:178.94px"></div>
<div class="cl" style="top:175.39px"><span class="k">  </span><span class="lv">v2</span><span class="k">[1] = 0;</span></div>
<div class="ln" style="top:190.12px">10</div>
<div class="dot" style="top:193.67px"></div>
<div class="cl" style="top:190.12px"><span class="k">  </span><span class="lv">v3</span><span class="k"> = 0;</span></div>
<div class="ln" style="top:204.85px">11</div>
<div class="dot" style="top:208.40px"></div>
<div class="cl" style="top:204.85px"><span class="k">  for ( </span><span class="lv">i</span><span class="k"> = 0; </span><span class="lv">i</span><span class="k"> &lt; 9; ++</span><span class="lv">i</span><span class="k"> )</span></div>
<div class="ln" style="top:219.58px">12</div>
<div class="cl" style="top:219.58px"><span class="k">  {</span></div>
<div class="ln" style="top:234.31px">13</div>
<div class="dot" style="top:237.86px"></div>
<div class="cl" style="top:234.31px"><span class="k">    for ( </span><span class="lv">j</span><span class="k"> = 0; </span><span class="lv">j</span><span class="k"> &lt; 9; ++</span><span class="lv">j</span><span class="k"> )</span></div>
<div class="ln" style="top:249.04px">14</div>
<div class="dot" style="top:252.59px"></div>
<div class="cl" style="top:249.04px"><span class="k">      *((</span><span class="gray">_BYTE *</span><span class="k">)</span><span class="lv">v2</span><span class="k"> + </span><span class="lv">j</span><span class="k">) = </span><span class="gv">byte_420000</span><span class="k">[</span><span class="gv">byte_420054</span><span class="k">[9 * </span><span class="lv">i</span><span class="k"> + </span><span class="lv">j</span><span class="k">]];</span></div>
<div class="ln" style="top:263.77px">15</div>
<div class="dot" style="top:267.32px"></div>
<div class="cl" style="top:263.77px"><span class="k">    if ( !</span><span class="gv">sub_4004C6</span><span class="k">((</span><span class="gray">int</span><span class="k">)</span><span class="lv">v2</span><span class="k">) )</span></div>
<div class="ln" style="top:278.50px">16</div>
<div class="dot" style="top:282.05px"></div>
<div class="cl" style="top:278.50px"><span class="k">      return 0;</span></div>
<div class="ln" style="top:293.23px">17</div>
<div class="cl" style="top:293.23px"><span class="k">  }</span></div>
<div class="ln" style="top:307.96px">18</div>
<div class="dot" style="top:311.51px"></div>
<div class="cl" style="top:307.96px"><span class="k">  return 1;</span></div>
<div class="ln" style="top:322.69px">19</div>
<div class="dot" style="top:326.24px"></div>
<div class="cl" style="top:322.69px"><span class="k">}</span></div>
<div class="abs mono" style="left:1127px;top:975.7px;font-family:'DejaVu Sans Mono','Liberation Mono',monospace;font-size:9.75px;line-height:14px;letter-spacing:0;color:#111">00000588 sub_400580:19 (400588)</div>
</body></html>
